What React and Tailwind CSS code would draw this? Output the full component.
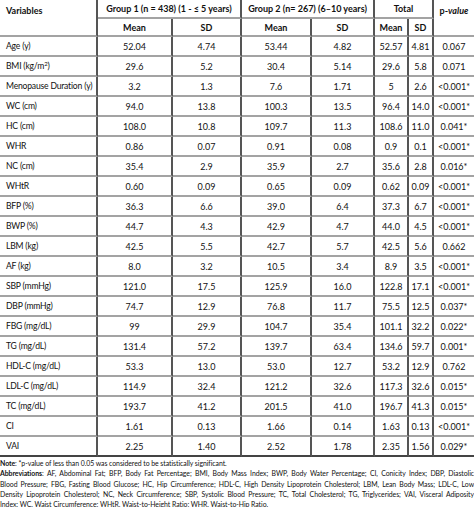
const rows = [
  ["Age (y)", "52.04", "4.74", "53.44", "4.82", "52.57", "4.81", "0.067"],
  ["BMI", "29.6", "5.2", "30.4", "5.14", "29.6", "5.8", "0.071"],
  ["Menopause Duration (y)", "3.2", "1.3", "7.6", "1.71", "5", "2.6", "<0.001*"],
  ["WC (cm)", "94.0", "13.8", "100.3", "13.5", "96.4", "14.0", "<0.001*"],
  ["HC (cm)", "108.0", "10.8", "109.7", "11.3", "108.6", "11.0", "0.041*"],
  ["WHR", "0.86", "0.07", "0.91", "0.08", "0.9", "0.1", "<0.001*"],
  ["NC (cm)", "35.4", "2.9", "35.9", "2.7", "35.6", "2.8", "0.016*"],
  ["WHtR", "0.60", "0.09", "0.65", "0.09", "0.62", "0.09", "<0.001*"],
  ["BFP (%)", "36.3", "6.6", "39.0", "6.4", "37.3", "6.7", "<0.001*"],
  ["BWP (%)", "44.7", "4.3", "42.9", "4.7", "44.0", "4.5", "<0.001*"],
  ["LBM (kg)", "42.5", "5.5", "42.7", "5.7", "42.5", "5.6", "0.662"],
  ["AF (kg)", "8.0", "3.2", "10.5", "3.4", "8.9", "3.5", "<0.001*"],
  ["SBP (mmHg)", "121.0", "17.5", "125.9", "16.0", "122.8", "17.1", "<0.001*"],
  ["DBP (mmHg)", "74.7", "12.9", "76.8", "11.7", "75.5", "12.5", "0.037*"],
  ["FBG (mg/dL)", "99", "29.9", "104.7", "35.4", "101.1", "32.2", "0.022*"],
  ["TG (mg/dL)", "131.4", "57.2", "139.7", "63.4", "134.6", "59.7", "0.001*"],
  ["HDL-C (mg/dL)", "53.3", "13.0", "53.0", "12.7", "53.2", "12.9", "0.762"],
  ["LDL-C (mg/dL)", "114.9", "32.4", "121.2", "32.6", "117.3", "32.6", "0.015*"],
  ["TC (mg/dL)", "193.7", "41.2", "201.5", "41.0", "196.7", "41.3", "0.015*"],
  ["CI", "1.61", "0.13", "1.66", "0.14", "1.63", "0.13", "<0.001*"],
  ["VAI", "2.25", "1.40", "2.52", "1.78", "2.35", "1.56", "0.029*"],
];

const widths = ["w-[98px]", "w-[75px]", "w-[69px]", "w-[70px]", "w-[63px]", "w-[34px]", "w-[25px]", "w-[40px]"];

// vertical rule on the right of every column but the last
const vr = "border-r-2 border-r-[#555]";
const hr = "border-b-2 border-b-[#a3a3a3]";

const abbrevLines = [
  "AF, Abdominal Fat; BFP, Body Fat Percentage; BMI, Body Mass Index; BWP, Body Water Percentage; CI, Conicity Index; DBP, Diastolic",
  "Blood Pressure; FBG, Fasting Blood Glucose; HC, Hip Circumference; HDL-C, High Density Lipoprotein Cholesterol; LBM, Lean Body Mass; LDL-C, Low",
  "Density Lipoprotein Cholesterol; NC, Neck Circumference; SBP, Systolic Blood Pressure; TC, Total Cholesterol; TG, Triglycerides; VAI, Visceral Adiposity",
];

const Cell = ({ children, idx, last }) => {
  const isLastCol = idx === 7;
  return (
    <td
      className={`h-[20px] p-0 align-middle whitespace-nowrap ${
        idx === 0 ? "pl-[6px] text-left text-[8.6px] tracking-[-0.2px]" : "text-center"
      } ${isLastCol ? "" : vr} ${last ? "border-b-2 border-b-[#444]" : hr}`}
    >
      {children}
    </td>
  );
};

const App = () => {
  return (
    <div className="w-[474px] h-[507px] overflow-hidden bg-white text-[#111] font-['Lato',sans-serif]">
      <table className="w-[474px] table-fixed border-separate border-spacing-0 text-[9px] leading-none">
        <colgroup>
          {widths.map((w, i) => (
            <col key={i} className={w} />
          ))}
        </colgroup>
        <thead>
          <tr>
            <th rowSpan={2} className={`h-[37px] p-0 pl-[6px] pt-[6px] text-left align-top font-bold ${vr} ${hr}`}>
              Variables
            </th>
            <th colSpan={2} className={`h-[19px] p-0 text-center font-bold whitespace-nowrap ${vr} ${hr}`}>
              Group 1 (n = 438) (1 - ≤ 5 years)
            </th>
            <th colSpan={2} className={`h-[19px] p-0 text-center font-bold whitespace-nowrap ${vr} ${hr}`}>
              Group 2 (n= 267) (6–10 years)
            </th>
            <th colSpan={2} className={`h-[19px] p-0 text-center font-bold ${vr} ${hr}`}>
              Total
            </th>
            <th rowSpan={2} className={`p-0 pt-[6px] text-center align-top font-bold ${hr}`}>
              p-<i>value</i>
            </th>
          </tr>
          <tr>
            {["Mean", "SD", "Mean", "SD", "Mean", "SD"].map((t, i) => (
              <th key={i} className={`h-[18px] p-0 text-center font-bold ${vr} ${hr}`}>
                {t}
              </th>
            ))}
          </tr>
        </thead>
        <tbody>
          {rows.map((r, ri) => (
            <tr key={ri}>
              {r.map((v, ci) => (
                <Cell key={ci} idx={ci} last={ri === rows.length - 1}>
                  {ri === 1 && ci === 0 ? (
                    <>
                      BMI (kg/m<sup className="text-[6px]">2</sup>)
                    </>
                  ) : (
                    v
                  )}
                </Cell>
              ))}
            </tr>
          ))}
        </tbody>
      </table>

      <div className="pt-[1px] text-[6.9px] leading-[10.3px] tracking-[-0.05px] whitespace-nowrap">
        <div>
          <b>Note</b>: *p-value of less than 0.05 was considered to be statistically significant.
        </div>
        {abbrevLines.map((l, i) => (
          <div key={i} className="text-justify [text-align-last:justify]">
            {i === 0 && (
              <>
                <b>Abbreviations</b>:{" "}
              </>
            )}
            {l}
          </div>
        ))}
        <div>Index; WC, Waist Circumference; WHtR, Waist-to-Height Ratio; WHR, Waist-to-Hip Ratio.</div>
      </div>
    </div>
  );
};

export default App;
